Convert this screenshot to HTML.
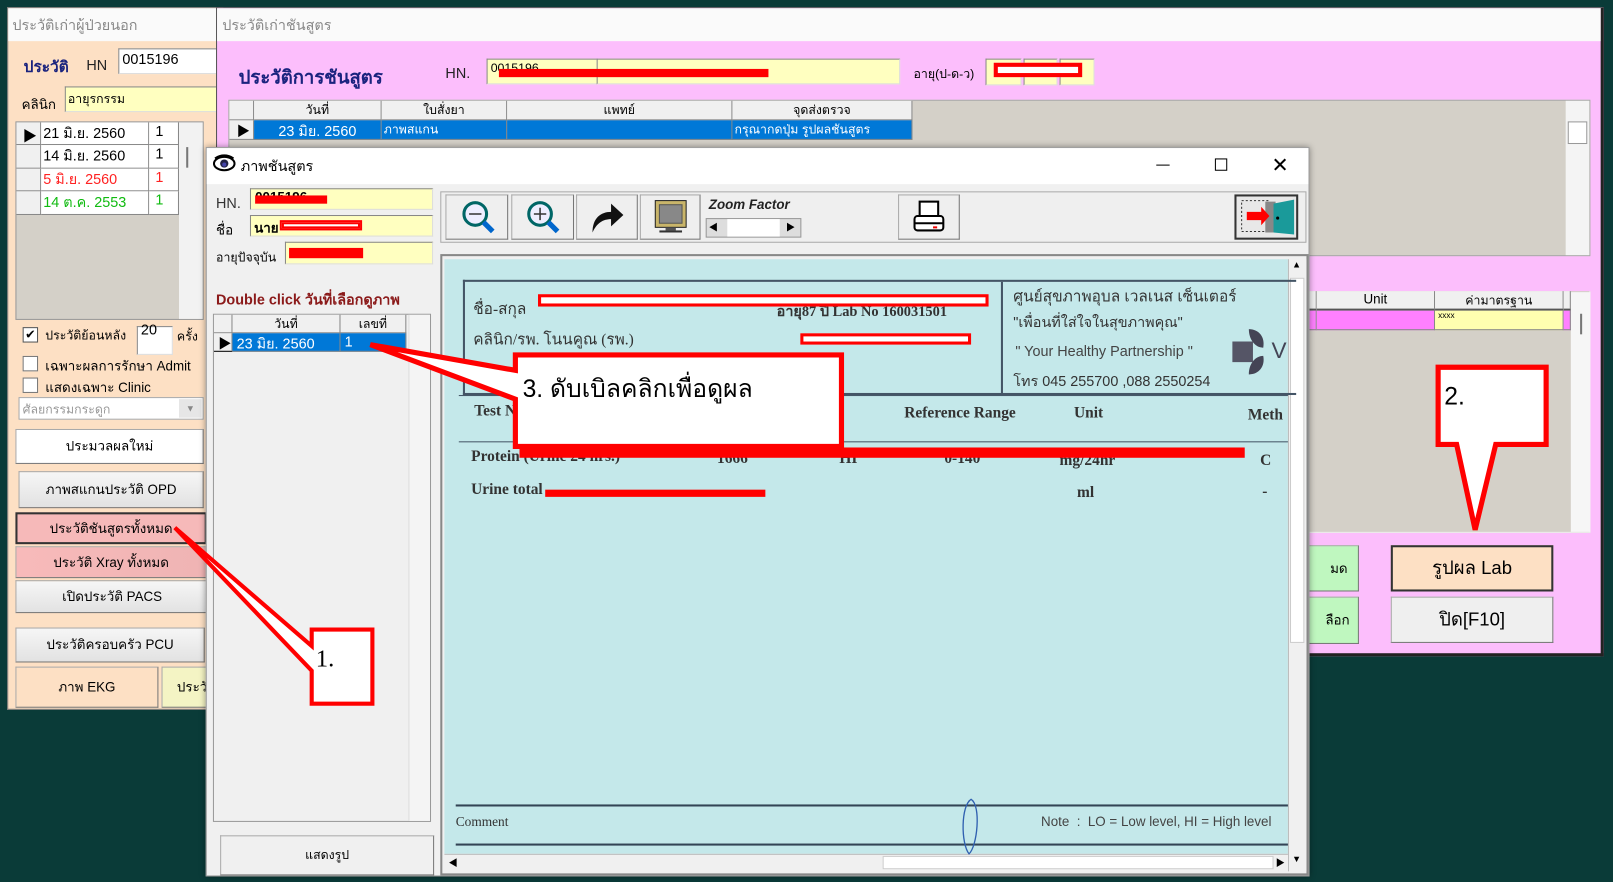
<!DOCTYPE html>
<html><head><meta charset="utf-8">
<style>
*{box-sizing:border-box;margin:0;padding:0}
body{width:1613px;height:881px;background:#0a3b38;position:relative;overflow:hidden;font-family:"Liberation Sans","Noto Sans CJK SC","WenQuanYi Zen Hei",sans-serif;font-size:13px;color:#000}
#w{position:absolute;left:0;top:0;width:1568px;height:857px;transform:scale(1.02870);transform-origin:0 0}
.a{position:absolute}
.t{position:absolute;white-space:nowrap}
.in{position:absolute;border:1px solid #888;border-right-color:#ddd;border-bottom-color:#ddd;background:#ffffc0}
.btn{position:absolute;border:1px solid #aaa;border-right-color:#777;border-bottom-color:#777;background:linear-gradient(#f6f6f6,#e2e2e2);text-align:center;font-size:13px}
.red{position:absolute;background:#ff0000}
.cell{position:absolute;border-right:1px solid #888;border-bottom:1px solid #888;white-space:nowrap;overflow:hidden}
.hd{background:#f0f0f0;text-align:center;font-size:12px}
.ser{font-family:"Liberation Serif","Noto Serif CJK SC",serif;color:#333}
</style></head><body><div id="w">

<!-- LEFT WINDOW -->
<div class="a" style="left:7px;top:7px;width:210px;height:683px;background:#fde0c4;border:1px solid #777"></div>
<div class="a" style="left:8px;top:8px;width:208px;height:32px;background:#fafafa"></div>
<div class="t" style="left:12px;top:14px;color:#888;font-size:14px">ประวัติเก่าผู้ป่วยนอก</div>
<div class="t" style="left:23px;top:53px;color:#1a237e;font-weight:bold;font-size:15px">ประวัติ</div>
<div class="t" style="left:84px;top:55px;font-size:14px;color:#222">HN</div>
<div class="in" style="left:115px;top:47px;width:100px;height:25px;background:#fff"></div>
<div class="t" style="left:119px;top:49px;font-size:14px">0015196</div>
<div class="t" style="left:21px;top:91px;font-size:13px">คลินิก</div>
<div class="in" style="left:63px;top:84px;width:152px;height:25px"></div>
<div class="t" style="left:66px;top:87px;font-size:12px">อายุรกรรม</div>
<!-- grid -->
<div class="a" style="left:15px;top:118px;width:183px;height:193px;background:#d4d0c8;border:1px solid #999"></div>
<div class="a" style="left:174px;top:119px;width:23px;height:191px;background:#f2f2f2"></div>
<div class="a" style="left:181px;top:143px;width:2px;height:20px;background:#777"></div>
<div class="cell" style="left:16px;top:119px;width:24px;height:22px;background:#f0f0f0"></div>
<div class="t" style="left:22px;top:122px;font-size:14px">▶</div>
<div class="cell" style="left:40px;top:119px;width:105px;height:22px;background:#fff;padding-left:2px;font-size:14px">21 มิ.ย. 2560</div>
<div class="cell" style="left:145px;top:119px;width:29px;height:22px;background:#fff;padding-left:6px;font-size:14px">1</div>
<div class="cell" style="left:16px;top:141px;width:24px;height:23px;background:#f0f0f0"></div>
<div class="cell" style="left:40px;top:141px;width:105px;height:23px;background:#fff;padding-left:2px;font-size:14px">14 มิ.ย. 2560</div>
<div class="cell" style="left:145px;top:141px;width:29px;height:23px;background:#fff;padding-left:6px;font-size:14px">1</div>
<div class="cell" style="left:16px;top:164px;width:24px;height:22px;background:#f0f0f0"></div>
<div class="cell" style="left:40px;top:164px;width:105px;height:22px;background:#fff;padding-left:2px;font-size:14px;color:#f22">5 มิ.ย. 2560</div>
<div class="cell" style="left:145px;top:164px;width:29px;height:22px;background:#fff;padding-left:6px;font-size:14px;color:#f22">1</div>
<div class="cell" style="left:16px;top:186px;width:24px;height:23px;background:#f0f0f0"></div>
<div class="cell" style="left:40px;top:186px;width:105px;height:23px;background:#fff;padding-left:2px;font-size:14px;color:#1b1">14 ต.ค. 2553</div>
<div class="cell" style="left:145px;top:186px;width:29px;height:23px;background:#fff;padding-left:6px;font-size:14px;color:#1b1">1</div>
<!-- checkboxes -->
<div class="a" style="left:22px;top:318px;width:15px;height:15px;background:#fff;border:1px solid #555;font-size:12px;line-height:13px;text-align:center">✔</div>
<div class="t" style="left:44px;top:317px;font-size:12px">ประวัติย้อนหลัง</div>
<div class="in" style="left:133px;top:317px;width:35px;height:28px;background:#fff"></div>
<div class="t" style="left:137px;top:312px;font-size:14px">20</div>
<div class="t" style="left:172px;top:318px;font-size:12px">ครั้ง</div>
<div class="a" style="left:22px;top:346px;width:15px;height:15px;background:#fff;border:1px solid #777"></div>
<div class="t" style="left:44px;top:345px;font-size:13px">เฉพาะผลการรักษา Admit</div>
<div class="a" style="left:22px;top:367px;width:15px;height:15px;background:#fff;border:1px solid #777"></div>
<div class="t" style="left:44px;top:366px;font-size:13px">แสดงเฉพาะ Clinic</div>
<div class="a" style="left:18px;top:386px;width:180px;height:22px;background:#fff;border:1px solid #aaa"></div>
<div class="t" style="left:22px;top:389px;font-size:12px;color:#999">ศัลยกรรมกระดูก</div>
<div class="a" style="left:174px;top:388px;width:22px;height:18px;background:#e6e6e6;font-size:9px;color:#888;text-align:center;line-height:18px">▼</div>
<div class="btn" style="left:15px;top:417px;width:183px;height:34px;background:#fff;line-height:32px">ประมวลผลใหม่</div>
<div class="btn" style="left:18px;top:458px;width:180px;height:36px;line-height:34px">ภาพสแกนประวัติ OPD</div>
<div class="btn" style="left:15px;top:498px;width:186px;height:31px;background:#f6b9b9;border:2px solid #333;line-height:27px">ประวัติชันสูตรทั้งหมด</div>
<div class="btn" style="left:15px;top:531px;width:186px;height:31px;background:linear-gradient(90deg,#f8baba,#efb4b4);line-height:29px">ประวัติ Xray ทั้งหมด</div>
<div class="btn" style="left:15px;top:564px;width:188px;height:32px;line-height:30px">เปิดประวัติ PACS</div>
<div class="btn" style="left:15px;top:610px;width:184px;height:34px;line-height:32px">ประวัติครอบครัว PCU</div>
<div class="btn" style="left:15px;top:648px;width:139px;height:40px;background:#fde0c4;line-height:38px">ภาพ EKG</div>
<div class="btn" style="left:157px;top:648px;width:58px;height:40px;background:#f4f4c4;line-height:38px;text-align:left;padding-left:14px;overflow:hidden">ประวั</div>

<!-- LAB HISTORY WINDOW -->
<div class="a" style="left:210px;top:7px;width:1349px;height:631px;background:#fcbefc;border:1px solid #555;border-right:3px solid #222;border-bottom:3px solid #222"></div>
<div class="a" style="left:211px;top:8px;width:1345px;height:32px;background:#fafafa"></div>
<div class="t" style="left:216px;top:14px;color:#888;font-size:14px">ประวัติเก่าชันสูตร</div>
<div class="t" style="left:232px;top:60px;color:#1a237e;font-weight:bold;font-size:18px">ประวัติการชันสูตร</div>
<div class="t" style="left:433px;top:63px;font-size:14px;color:#222">HN.</div>
<div class="in" style="left:473px;top:57px;width:108px;height:25px"></div>
<div class="in" style="left:580px;top:57px;width:295px;height:25px"></div>
<div class="t" style="left:477px;top:59px;font-size:12px">0015196</div>
<div class="red" style="left:485px;top:67px;width:262px;height:8px"></div>
<div class="t" style="left:888px;top:63px;font-size:12px">อายุ(ป-ด-ว)</div>
<div class="in" style="left:958px;top:57px;width:35px;height:26px"></div>
<div class="in" style="left:995px;top:57px;width:33px;height:26px"></div>
<div class="in" style="left:1030px;top:57px;width:34px;height:26px"></div>
<div class="a" style="left:966px;top:61px;width:86px;height:14px;border:4px solid #f00;background:#fff"></div>
<!-- top grid -->
<div class="a" style="left:222px;top:97px;width:1324px;height:152px;background:#d4d0c8;border:1px solid #aaa"></div>
<div class="a" style="left:1522px;top:98px;width:23px;height:150px;background:#f4f4f4"></div>
<div class="a" style="left:1524px;top:118px;width:19px;height:22px;background:#fff;border:1px solid #999"></div>
<div class="cell hd" style="left:223px;top:98px;width:24px;height:19px"></div>
<div class="cell hd" style="left:247px;top:98px;width:124px;height:19px">วันที่</div>
<div class="cell hd" style="left:371px;top:98px;width:122px;height:19px">ใบสั่งยา</div>
<div class="cell hd" style="left:493px;top:98px;width:219px;height:19px">แพทย์</div>
<div class="cell hd" style="left:712px;top:98px;width:175px;height:19px">จุดส่งตรวจ</div>
<div class="cell" style="left:223px;top:117px;width:24px;height:19px;background:#f0f0f0;font-size:13px;padding-left:7px">▶</div>
<div class="cell" style="left:247px;top:117px;width:124px;height:19px;background:#0078d7;color:#fff;font-size:14px;text-align:center">23 มิย. 2560</div>
<div class="cell" style="left:371px;top:117px;width:122px;height:19px;background:#0078d7;color:#fff;font-size:12px;padding-left:2px">ภาพสแกน</div>
<div class="cell" style="left:493px;top:117px;width:219px;height:19px;background:#0078d7"></div>
<div class="cell" style="left:712px;top:117px;width:175px;height:19px;background:#0078d7;color:#fff;font-size:12px;padding-left:2px">กรุณากดปุ่ม รูปผลชันสูตร</div>
<!-- lower grid -->
<div class="a" style="left:1270px;top:283px;width:276px;height:235px;background:#d4d0c8;border-right:1px solid #eee;border-bottom:1px solid #eee"></div>
<div class="a" style="left:1527px;top:284px;width:19px;height:233px;background:#f6f6f6"></div>
<div class="a" style="left:1536px;top:305px;width:2px;height:20px;background:#777"></div>
<div class="cell hd" style="left:1270px;top:283px;width:10px;height:19px;border-bottom:2px solid #555"></div>
<div class="cell hd" style="left:1280px;top:283px;width:115px;height:19px;font-size:13px;border-bottom:2px solid #555">Unit</div>
<div class="cell hd" style="left:1395px;top:283px;width:125px;height:19px;border-bottom:2px solid #555">ค่ามาตรฐาน</div>
<div class="cell hd" style="left:1520px;top:283px;width:7px;height:19px;border-bottom:2px solid #555"></div>
<div class="cell" style="left:1270px;top:302px;width:10px;height:19px;background:#ff80ff"></div>
<div class="cell" style="left:1280px;top:302px;width:115px;height:19px;background:#ff80ff"></div>
<div class="cell" style="left:1395px;top:302px;width:125px;height:19px;background:#ffffb0;font-size:8px;padding-left:3px">xxxx</div>
<div class="cell" style="left:1520px;top:302px;width:7px;height:19px;background:#ff80ff"></div>
<div class="btn" style="left:1268px;top:530px;width:53px;height:45px;background:#bff7bf;line-height:43px;text-align:right;padding-right:10px">มด</div>
<div class="btn" style="left:1268px;top:580px;width:53px;height:46px;background:#bff7bf;line-height:44px;text-align:right;padding-right:8px">ลือก</div>
<div class="btn" style="left:1352px;top:530px;width:158px;height:45px;background:#fde0c4;border:2px solid #333;font-size:18px;line-height:40px">รูปผล Lab</div>
<div class="btn" style="left:1352px;top:580px;width:158px;height:45px;background:#efefef;font-size:18px;line-height:42px">ปิด[F10]</div>

<!-- DIALOG -->
<div class="a" style="left:200px;top:143px;width:1073px;height:709px;background:#f0f0f0;border:1px solid #999;box-shadow:0 0 6px rgba(0,0,0,.4)"></div>
<div class="a" style="left:201px;top:144px;width:1071px;height:35px;background:#fff"></div>
<svg class="a" style="left:207px;top:150px" width="22" height="18" viewBox="0 0 22 18"><ellipse cx="11" cy="9" rx="10" ry="6.5" fill="#fff" stroke="#000" stroke-width="2"/><circle cx="11" cy="9" r="4" fill="#224"/><circle cx="11" cy="10" r="2" fill="#44a"/><path d="M2 4 Q11-2 20 4" stroke="#000" stroke-width="2" fill="none"/></svg>
<div class="t" style="left:234px;top:151px;font-size:14px">ภาพชันสูตร</div>
<div class="a" style="left:1124px;top:160px;width:13px;height:1px;background:#000"></div>
<div class="a" style="left:1181px;top:154px;width:12px;height:12px;border:1px solid #000"></div>
<div class="t" style="left:1236px;top:148px;font-size:20px;font-weight:300">✕</div>
<!-- left panel -->
<div class="t" style="left:210px;top:189px;font-size:14px;color:#333">HN.</div>
<div class="in" style="left:243px;top:183px;width:178px;height:21px"></div>
<div class="t" style="left:248px;top:184px;font-size:13px;font-weight:bold">0015196</div>
<div class="red" style="left:248px;top:190px;width:70px;height:8px"></div>
<div class="t" style="left:210px;top:213px;font-size:13px">ชื่อ</div>
<div class="in" style="left:243px;top:209px;width:178px;height:21px"></div>
<div class="t" style="left:247px;top:211px;font-size:13px;font-weight:bold">นาย</div>
<div class="red" style="left:272px;top:214px;width:80px;height:10px;border:2px solid #f00;background:#fff;box-shadow:inset 0 0 0 2px #f00"></div>
<div class="t" style="left:210px;top:241px;font-size:12px">อายุปัจจุบัน</div>
<div class="in" style="left:277px;top:235px;width:144px;height:22px"></div>
<div class="red" style="left:281px;top:241px;width:72px;height:10px"></div>
<div class="t" style="left:210px;top:281px;font-size:14px;font-weight:bold;color:#8b1a1a">Double click วันที่เลือกดูภาพ</div>
<div class="a" style="left:207px;top:305px;width:212px;height:494px;background:#f0f0f0;border:1px solid #999"></div>
<div class="a" style="left:397px;top:306px;width:21px;height:492px;background:#f4f4f4;border-left:1px solid #ddd"></div>
<div class="cell hd" style="left:208px;top:306px;width:18px;height:18px"></div>
<div class="cell hd" style="left:226px;top:306px;width:105px;height:18px">วันที่</div>
<div class="cell hd" style="left:331px;top:306px;width:64px;height:18px">เลขที่</div>
<div class="cell" style="left:208px;top:324px;width:18px;height:18px;background:#f0f0f0;padding-left:4px;font-size:13px;border-bottom:1px solid #000">▶</div>
<div class="cell" style="left:226px;top:324px;width:105px;height:18px;background:#0078d7;color:#fff;font-size:14px;padding-left:4px">23 มิย. 2560</div>
<div class="cell" style="left:331px;top:324px;width:64px;height:18px;background:#0078d7;color:#fff;font-size:14px;padding-left:4px">1</div>
<div class="btn" style="left:214px;top:812px;width:208px;height:39px;background:#f0f0f0;line-height:36px;font-size:12px">แสดงรูป</div>
<!-- toolbar -->
<div class="a" style="left:428px;top:186px;width:842px;height:50px;border:1px solid #aaa;background:#efefef"></div>
<div class="btn" style="left:433px;top:189px;width:61px;height:44px;background:#efefef"></div>
<div class="btn" style="left:497px;top:189px;width:61px;height:44px;background:#efefef"></div>
<div class="btn" style="left:560px;top:189px;width:60px;height:44px;background:#efefef"></div>
<div class="btn" style="left:622px;top:189px;width:59px;height:44px;background:#efefef"></div>
<svg class="a" style="left:447px;top:193px" width="36" height="36" viewBox="0 0 36 36"><circle cx="15" cy="15" r="11" fill="#eef" stroke="#066" stroke-width="3"/><path d="M9 15h12" stroke="#333" stroke-width="1.5"/><path d="M23 23l9 9" stroke="#06c" stroke-width="5"/></svg>
<svg class="a" style="left:510px;top:193px" width="36" height="36" viewBox="0 0 36 36"><circle cx="15" cy="15" r="11" fill="#eef" stroke="#066" stroke-width="3"/><path d="M9 15h12M15 9v12" stroke="#333" stroke-width="1.5"/><path d="M23 23l9 9" stroke="#06c" stroke-width="5"/></svg>
<svg class="a" style="left:572px;top:194px" width="36" height="34" viewBox="0 0 36 34"><path d="M4 32 C4 18 12 12 22 12 L22 4 L34 15 L22 26 L22 19 C14 19 8 23 4 32Z" fill="#111"/></svg>
<svg class="a" style="left:634px;top:193px" width="36" height="36" viewBox="0 0 36 36"><rect x="3" y="2" width="30" height="26" fill="#c9b56a" stroke="#222"/><rect x="7" y="6" width="22" height="18" fill="#888" stroke="#555"/><rect x="13" y="28" width="10" height="3" fill="#555"/><rect x="7" y="31" width="22" height="2" fill="#333"/></svg>
<div class="t" style="left:689px;top:191px;font-size:13px;font-weight:bold;font-style:italic;color:#222">Zoom Factor</div>
<div class="a" style="left:686px;top:212px;width:93px;height:19px;background:#ddd;border:1px solid #999"></div>
<div class="a" style="left:707px;top:213px;width:51px;height:17px;background:#fff"></div>
<div class="t" style="left:689px;top:214px;font-size:9px">◀</div>
<div class="t" style="left:764px;top:214px;font-size:9px">▶</div>
<div class="btn" style="left:873px;top:189px;width:60px;height:44px;background:#efefef"></div>
<svg class="a" style="left:887px;top:194px" width="32" height="34" viewBox="0 0 32 34"><rect x="7" y="2" width="18" height="16" fill="#fff" stroke="#000" stroke-width="2"/><rect x="2" y="16" width="28" height="14" rx="3" fill="#fff" stroke="#000" stroke-width="2"/><path d="M2 23h28" stroke="#000" stroke-width="2"/><path d="M20 27h4" stroke="#e00" stroke-width="2"/></svg>
<div class="a" style="left:1200px;top:189px;width:62px;height:44px;border:2px solid #333;background:#e8e8e8"></div>
<svg class="a" style="left:1204px;top:192px" width="56" height="38" viewBox="0 0 56 38"><rect x="3" y="3" width="26" height="30" fill="none" stroke="#333" stroke-dasharray="2 2"/><rect x="26" y="4" width="10" height="30" fill="#888"/><path d="M8 14h14v-5l8 9-8 9v-5H8z" fill="#f00"/><path d="M34 6l20-4v34l-20-2z" fill="#1a9a9a"/><circle cx="38" cy="20" r="1.5" fill="#000"/></svg>
<!-- image area -->
<div class="a" style="left:428px;top:247px;width:844px;height:604px;border:2px solid #888;background:#f0f0f0"></div>
<div class="a" style="left:432px;top:252px;width:820px;height:578px;background:#c4e8ea"></div>
<div class="a" style="left:1252px;top:252px;width:18px;height:595px;background:#f0f0f0;border-left:1px solid #bbb"></div>
<div class="a" style="left:1254px;top:270px;width:14px;height:355px;background:#fff;border:1px solid #ccc"></div>
<div class="t" style="left:1256px;top:252px;font-size:9px">▲</div>
<div class="t" style="left:1256px;top:830px;font-size:9px">▼</div>
<div class="a" style="left:432px;top:830px;width:820px;height:17px;background:#f0f0f0;border-top:1px solid #bbb"></div>
<div class="a" style="left:858px;top:832px;width:380px;height:13px;background:#fff;border:1px solid #ccc"></div>
<div class="t" style="left:436px;top:832px;font-size:9px">◀</div>
<div class="t" style="left:1240px;top:832px;font-size:9px">▶</div>
<!-- lab form -->
<div class="a" style="left:450px;top:272px;width:810px;height:112px;border:2px solid #456;border-right:none"></div>
<div class="a" style="left:973px;top:274px;width:2px;height:110px;background:#456"></div>
<div class="t ser" style="left:460px;top:288px;font-size:15px">ชื่อ-สกุล</div>
<div class="t ser" style="left:755px;top:292px;font-size:14px;font-weight:bold">อายุ87 ปี Lab No 160031501</div>
<div class="red" style="left:523px;top:286px;width:438px;height:12px;border:3px solid #f00;background:#fff"></div>
<div class="t ser" style="left:460px;top:318px;font-size:15px">คลินิก/รพ. โนนคูณ (รพ.)</div>
<div class="red" style="left:778px;top:324px;width:166px;height:11px;border:3px solid #f00;background:#fff"></div>
<div class="t" style="left:985px;top:276px;font-size:15px;color:#333">ศูนย์สุขภาพอุบล เวลเนส เซ็นเตอร์</div>
<div class="t" style="left:985px;top:303px;font-size:14px;color:#333">"เพื่อนที่ใส่ใจในสุขภาพคุณ"</div>
<div class="t" style="left:987px;top:333px;font-size:14px;color:#444">" Your Healthy Partnership "</div>
<div class="t" style="left:985px;top:360px;font-size:14px;color:#333">โทร 045 255700 ,088 2550254</div>
<svg class="a" style="left:1196px;top:318px" width="56" height="48" viewBox="0 0 56 48"><path d="M2 14h20v20H2z" fill="#556"/><path d="M18 2c10 0 16 8 14 18-8 0-14-8-14-18zM18 46c10 0 16-8 14-18-8 0-14 8-14 18z" fill="#445"/><text x="40" y="30" font-size="22" fill="#445" font-family="Liberation Sans">V</text></svg>
<div class="t ser" style="left:461px;top:392px;font-size:15px;font-weight:bold">Test N</div>
<div class="t ser" style="left:879px;top:394px;font-size:15px;font-weight:bold">Reference Range</div>
<div class="t ser" style="left:1044px;top:394px;font-size:15px;font-weight:bold">Unit</div>
<div class="t ser" style="left:1213px;top:396px;font-size:15px;font-weight:bold">Meth</div>
<div class="a" style="left:446px;top:429px;width:806px;height:1px;background:#456"></div>
<div class="a" style="left:446px;top:384px;width:806px;height:1px;background:#456"></div>
<div class="t ser" style="left:458px;top:436px;font-size:15px;font-weight:bold">Protein (Urine 24 hrs.)</div>
<div class="t ser" style="left:697px;top:438px;font-size:15px;font-weight:bold">1666</div>
<div class="t ser" style="left:816px;top:438px;font-size:15px;font-weight:bold">HI</div>
<div class="t ser" style="left:918px;top:438px;font-size:15px;font-weight:bold">0-140</div>
<div class="t ser" style="left:1030px;top:440px;font-size:15px;font-weight:bold">mg/24hr</div>
<div class="t ser" style="left:1225px;top:440px;font-size:15px;font-weight:bold">C</div>
<div class="t ser" style="left:458px;top:468px;font-size:15px;font-weight:bold">Urine total</div>
<div class="t ser" style="left:1047px;top:471px;font-size:15px;font-weight:bold">ml</div>
<div class="t ser" style="left:1227px;top:470px;font-size:15px;font-weight:bold">-</div>
<div class="red" style="left:530px;top:476px;width:214px;height:7px"></div>
<div class="a" style="left:443px;top:782px;width:809px;height:2px;background:#345"></div>
<div class="a" style="left:443px;top:820px;width:809px;height:2px;background:#345"></div>
<div class="t ser" style="left:443px;top:791px;font-size:13px">Comment</div>
<div class="t" style="left:1012px;top:791px;font-size:13px;color:#444">Note &nbsp;: &nbsp;LO = Low level, HI = High level</div>
<svg class="a" style="left:920px;top:775px" width="50" height="60"><path d="M24 2C14 8 14 45 22 55 30 48 34 8 24 2Z" fill="none" stroke="#3060b0" stroke-width="1.3"/></svg>

<!-- CALLOUTS -->
<svg class="a" style="left:0;top:0" width="1568" height="857">
<polygon points="303,612 362,612 362,684 303,684 303,652 170,513 303,628" fill="#fff" stroke="#f00" stroke-width="4"/>
<polygon points="1398,357 1503,357 1503,432 1454,432 1434,515 1416,432 1398,432" fill="#fff" stroke="#f00" stroke-width="5"/>
<polygon points="501,345 818,345 818,434 501,434 501,388 360,335 501,360" fill="#fff" stroke="#f00" stroke-width="5"/>
</svg>
<div class="t" style="left:307px;top:628px;font-size:24px;font-family:'Liberation Serif',serif">1.</div>
<div class="t" style="left:1404px;top:372px;font-size:24px">2.</div>
<div class="t" style="left:508px;top:358px;font-size:24px">3. ดับเบิลคลิกเพื่อดูผล</div>
<div class="red" style="left:505px;top:435px;width:705px;height:10px"></div>
</div></body></html>
